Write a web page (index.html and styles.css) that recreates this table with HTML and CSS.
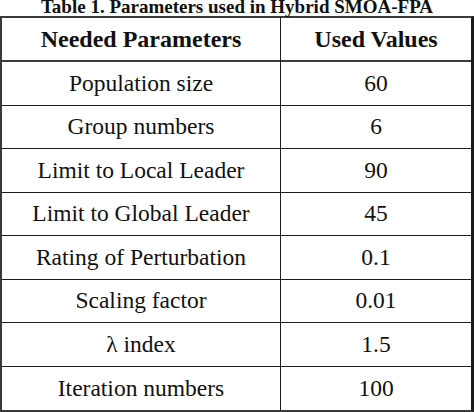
FILE: index.html
```html
<!DOCTYPE html>
<html>
<head>
<meta charset="utf-8">
<link rel="stylesheet" href="styles.css">
</head>
<body>
<div class="page">
  <div class="title">Table 1. Parameters used in Hybrid SMOA-FPA</div>
  <div class="table">
    <div class="cell head left">Needed Parameters</div>
    <div class="cell head">Used Values</div>
    <div class="cell left">Population size</div>
    <div class="cell">60</div>
    <div class="cell left">Group numbers</div>
    <div class="cell">6</div>
    <div class="cell left">Limit to Local Leader</div>
    <div class="cell">90</div>
    <div class="cell left">Limit to Global Leader</div>
    <div class="cell">45</div>
    <div class="cell left">Rating of Perturbation</div>
    <div class="cell">0.1</div>
    <div class="cell left">Scaling factor</div>
    <div class="cell">0.01</div>
    <div class="cell left">λ index</div>
    <div class="cell">1.5</div>
    <div class="cell left last">Iteration numbers</div>
    <div class="cell last">100</div>
  </div>
</div>
</body>
</html>
```
FILE: styles.css
```css
html, body {
  margin: 0;
  padding: 0;
  background: #ffffff;
}
.page {
  width: 474px;
  height: 412px;
  overflow: hidden;
  font-family: "Liberation Serif", "Times New Roman", serif;
  color: #111111;
}
.title {
  height: 16px;
  line-height: 13px;
  font-size: 19px;
  font-weight: bold;
  text-align: center;
  white-space: nowrap;
}
.table {
  display: grid;
  grid-template-columns: 279px 190px;
  grid-template-rows: 44px repeat(8, 43.5px);
  border-top: 2px solid #3a3a3a;
  border-left: 2px solid #3a3a3a;
  border-right: 3px solid #1a1a1a;
  border-bottom: 2px solid #3a3a3a;
  width: 469px;
}
.cell {
  display: flex;
  align-items: center;
  justify-content: center;
  font-size: 23.5px;
  border-bottom: 1px solid #1e1e1e;
  white-space: nowrap;
}
.cell.left {
  border-right: 1px solid #1e1e1e;
}
.cell.head {
  font-weight: bold;
  font-size: 24px;
  border-bottom: 2px solid #3a3a3a;
}
.cell.last {
  border-bottom: none;
}
```
